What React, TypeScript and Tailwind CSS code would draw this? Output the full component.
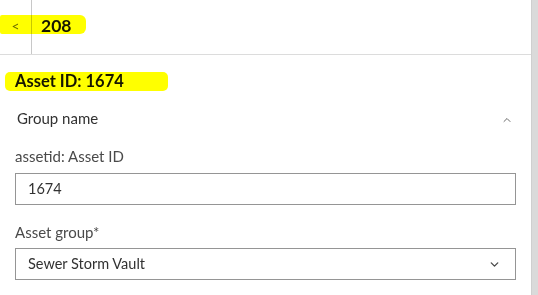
import { ChevronDown, ChevronUp } from "lucide-react";

function Highlight({ className }: { className: string }) {
  return (
    <div
      className={`pointer-events-none absolute bg-[#ffff00] mix-blend-multiply ${className}`}
    />
  );
}

export default function App() {
  return (
    <div className="flex h-[295px] w-[538px] overflow-hidden bg-white font-['Lato',_sans-serif] text-[#323232]">
      <div className="relative flex min-w-0 flex-1 flex-col">
        <Highlight className="left-0 top-[15px] h-[19px] w-[86px] rounded-r-[6px] rounded-l-[2px]" />
        <Highlight className="left-[5px] top-[72px] h-[19px] w-[163px] rounded-[5px]" />

        <header className="flex h-[55px] shrink-0 border-b border-[#dcdcdc]">
          <button className="flex w-[32px] items-start justify-center border-r border-[#c8c8c8] pt-[15px] text-[14px] text-[#6a6a6a]">
            &lt;
          </button>
          <h1 className="pl-[9px] pt-[13px] text-[17.5px] font-bold text-[#151515]">208</h1>
        </header>

        <div className="flex flex-col px-[15px]">
          <h2 className="pt-[15px] text-[16.5px] font-bold leading-[22px] text-[#151515]">Asset ID: 1674</h2>

          <div className="mt-[13px] flex h-[26px] items-center justify-between pl-[2px] pr-[3px]">
            <span className="text-[15px] text-[#323232]">Group name</span>
            <ChevronUp className="mt-[4px] h-[12px] w-[12px] text-[#6a6a6a]" strokeWidth={2} />
          </div>

          <label className="mt-[15px] text-[15px] leading-[20px] text-[#4a4a4a]">assetid: Asset ID</label>
          <div className="mt-[7px] flex h-[32px] items-center border border-[#959595] px-[12px] text-[14.5px] text-[#323232]">
            1674
          </div>

          <label className="mt-[17px] text-[15px] leading-[20px] text-[#4a4a4a]">Asset group*</label>
          <div className="mt-[6px] flex h-[32px] items-center justify-between border border-[#959595] pl-[12px] pr-[14px] text-[14.5px] text-[#323232]">
            <span>Sewer Storm Vault</span>
            <ChevronDown className="h-[13px] w-[13px] text-[#4a4a4a]" strokeWidth={2.5} />
          </div>
        </div>
      </div>
      <div className="h-full w-[7px] shrink-0 border-l border-[#cfcfcf] bg-[#dadada]" />
    </div>
  );
}
